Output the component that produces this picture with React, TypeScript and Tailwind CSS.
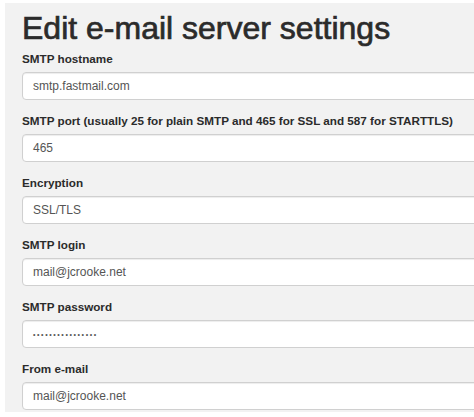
import React from "react";

const fields: { label: string; value: string; password?: boolean }[] = [
  { label: "SMTP hostname", value: "smtp.fastmail.com" },
  { label: "SMTP port (usually 25 for plain SMTP and 465 for SSL and 587 for STARTTLS)", value: "465" },
  { label: "Encryption", value: "SSL/TLS" },
  { label: "SMTP login", value: "mail@jcrooke.net" },
  { label: "SMTP password", value: "••••••••••••••••", password: true },
  { label: "From e-mail", value: "mail@jcrooke.net" },
];

export default function App() {
  return (
    <div
      className="w-[474px] h-[417px] overflow-hidden bg-white"
      style={{ fontFamily: '"Liberation Sans", Arial, Helvetica, sans-serif' }}
    >
      <div className="ml-[5px] mt-[3px] w-[520px] bg-[#f2f2f2] pl-[17px] pt-[8px] pb-[2px]">
        <h1 className="text-[32px] leading-[34px] font-normal text-[#2b2b2b] mb-[5px] [-webkit-text-stroke:0.7px_#2b2b2b]">
          Edit e-mail server settings
        </h1>
        <div className="flex flex-col">
          {fields.map((f, i) => (
            <div key={i} className={i < fields.length - 1 ? "mb-[12px]" : ""}>
              <div className="text-[11.7px] leading-[18px] font-bold text-[#2b2b2b] mb-[4px]">{f.label}</div>
              <div className="h-[28px] w-[500px] rounded-[4px] border border-[#d0d0d0] bg-white shadow-[inset_0_1px_1px_rgba(0,0,0,0.075)] pl-[10px] flex items-center">
                {f.password ? (
                  <span className="text-[7px] tracking-[1.6px] text-[#555] leading-none">{f.value}</span>
                ) : (
                  <span className="text-[12px] text-[#555] leading-none">{f.value}</span>
                )}
              </div>
            </div>
          ))}
        </div>
      </div>
    </div>
  );
}
